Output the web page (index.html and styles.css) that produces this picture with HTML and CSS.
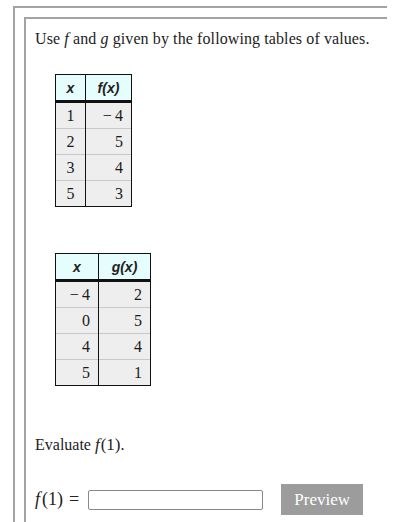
FILE: index.html
```html
<!DOCTYPE html>
<html>
<head>
<meta charset="utf-8">
<link rel="stylesheet" href="styles.css">
</head>
<body>
<div class="outer">
  <div class="inner">
    <p class="intro">Use <span class="mi">f</span> and <span class="mi">g</span> given by the following tables of values.</p>
    <table class="tbl t1">
      <thead>
        <tr><th class="c1">x</th><th class="c2">f(x)</th></tr>
      </thead>
      <tbody>
        <tr><td>1</td><td>−&#8201;4</td></tr>
        <tr><td>2</td><td>5</td></tr>
        <tr><td>3</td><td>4</td></tr>
        <tr><td>5</td><td>3</td></tr>
      </tbody>
    </table>
    <table class="tbl t2">
      <thead>
        <tr><th class="c1">x</th><th class="c2">g(x)</th></tr>
      </thead>
      <tbody>
        <tr><td>−&#8201;4</td><td>2</td></tr>
        <tr><td>0</td><td>5</td></tr>
        <tr><td>4</td><td>4</td></tr>
        <tr><td>5</td><td>1</td></tr>
      </tbody>
    </table>
    <p class="evaluate">Evaluate <span class="mi">f</span><span class="mn">(1)</span>.</p>
    <div class="answer">
      <span class="lhs"><span class="mi">f</span><span class="paren">(1)</span><span class="eq">=</span></span>
      <input class="ans" type="text">
      <button class="preview">Preview</button>
    </div>
  </div>
</div>
</body>
</html>
```

FILE: styles.css
```css
html, body {
  margin: 0;
  padding: 0;
  background: #fff;
}
body {
  font-family: "Liberation Serif", "Times New Roman", serif;
  font-size: 16px;
  color: #222;
}
.outer {
  margin: 6px 0 0 13px;
  width: 374px;
  border-top: 2px solid #a3a3a3;
  border-left: 2px solid #a3a3a3;
  padding: 9px 0 0 9px;
  box-sizing: border-box;
  height: 530px;
}
.inner {
  border-top: 2px solid #a3a3a3;
  border-left: 2px solid #a3a3a3;
  padding: 10px 0 0 9px;
  height: 520px;
  box-sizing: border-box;
}
.intro {
  margin: 0;
  line-height: 20px;
  letter-spacing: 0.1px;
}
.mi {
  font-style: italic;
  font-family: "Liberation Serif", serif;
}
.tbl {
  border-collapse: collapse;
  margin-left: 20px;
  border: 1px solid #111;
}
.tbl th {
  background: #e6fdfe;
  font-family: "Liberation Sans", Arial, sans-serif;
  font-style: italic;
  font-weight: bold;
  font-size: 14px;
  color: #222;
  height: 25px;
  padding: 0;
  text-align: center;
  border: 1px solid #111;
  border-bottom: 3px solid #111;
}
.tbl td {
  background: #eee;
  height: 25px;
  padding: 0 8px 0 0;
  text-align: right;
  font-size: 16px;
  color: #1a1a1a;
  border-left: 1px solid #111;
  border-right: 1px solid #111;
  border-top: 1px solid #c8c8c8;
}
.t1 {
  margin-top: 25px;
}
.t1 .c1 { width: 29px; }
.t1 .c2 { width: 45px; }
.t1 td:first-child {
  text-align: center;
  padding: 0;
}
.t2 {
  margin-top: 46px;
}
.t2 .c1 { width: 42px; }
.t2 .c2 { width: 51px; }
.evaluate {
  margin: 49px 0 0 0;
  line-height: 20px;
}
.evaluate .mi {
  font-size: 17px;
  margin-right: 1px;
}
.evaluate .mn {
  font-size: 17px;
}
.answer {
  margin-top: 29px;
  display: flex;
  align-items: center;
  height: 31px;
}
.lhs {
  font-size: 18px;
  white-space: nowrap;
}
.lhs .mi {
  margin-right: 2px;
}
.eq {
  margin-left: 6px;
}
.ans {
  margin: 0 0 0 9px;
  width: 175px;
  height: 20px;
  box-sizing: border-box;
  border: 1px solid #888;
  border-radius: 2px;
  padding: 0;
  background: #fff;
}
.preview {
  margin-left: 18px;
  width: 82px;
  height: 31px;
  border: none;
  background: #9c9c9c;
  color: #fff;
  font-family: "Liberation Serif", serif;
  font-size: 17px;
  padding: 0;
}
```
